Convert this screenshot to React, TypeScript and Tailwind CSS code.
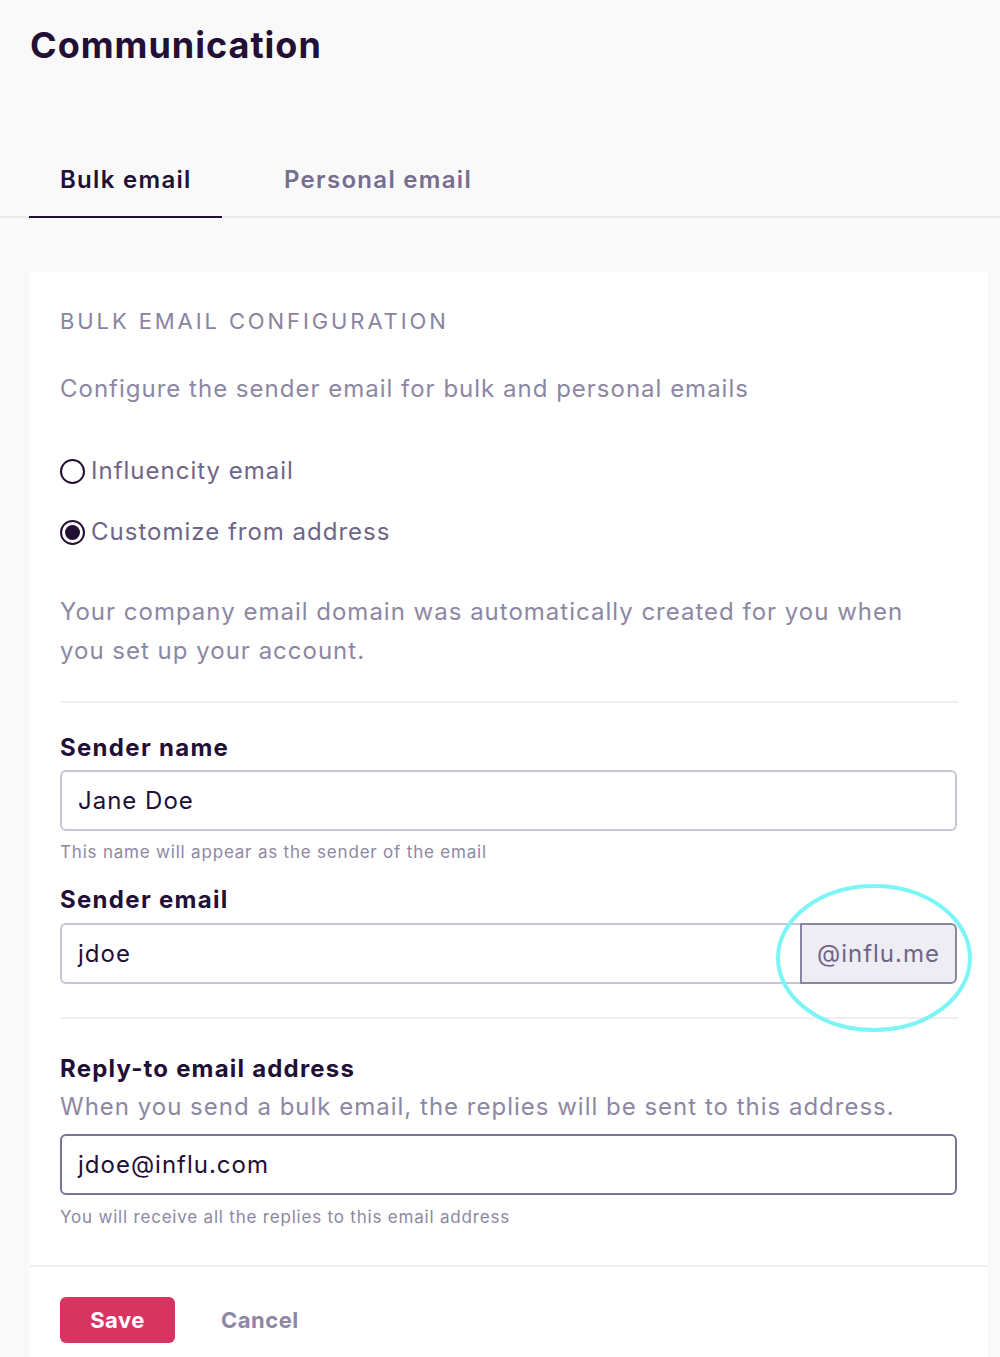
import React from "react";

export default function App() {
  const font = { fontFamily: "Inter, 'Noto Sans', sans-serif" };
  return (
    <div className="min-h-[1357px] w-[1000px] bg-[#f9f9fa] overflow-hidden" style={font}>
      <div className="pt-[22px] pl-[30px]">
        <h1 className="text-[36px] leading-[46px] font-bold tracking-[1px] text-[#230f35]">Communication</h1>
      </div>
      <div className="mt-[96px] flex border-b-2 border-[#ebe9f0] pl-[29px]">
        <div className="w-[193px] -mb-[2px] border-b-2 border-[#230f35] pb-[20px] pl-[31px] text-[24px] leading-[32px] font-semibold tracking-[1.3px] text-[#230f35]">
          Bulk email
        </div>
        <div className="pl-[62px] text-[24px] leading-[32px] font-semibold tracking-[1.3px] text-[#766d8f]">Personal email</div>
      </div>
      <div className="ml-[30px] mt-[54px] w-[958px] bg-white">
        <div className="px-[30px] pt-[35px]">
          <div className="text-[22px] leading-[28px] tracking-[2.9px] text-[#8a83a0]">BULK EMAIL CONFIGURATION</div>
          <div className="mt-[38px] text-[24px] leading-[32px] tracking-[1px] text-[#8d87a3]">
            Configure the sender email for bulk and personal emails
          </div>
          <div className="mt-[50px] flex items-center gap-[6px]">
            <span className="block h-[25px] w-[25px] rounded-full border-2 border-[#230f35]" />
            <span className="text-[24px] leading-[32px] tracking-[1px] text-[#6f6587]">Influencity email</span>
          </div>
          <div className="mt-[29px] flex items-center gap-[6px]">
            <span className="flex h-[25px] w-[25px] items-center justify-center rounded-full border-2 border-[#230f35]">
              <span className="block h-[15px] w-[15px] rounded-full bg-[#230f35]" />
            </span>
            <span className="text-[24px] leading-[32px] tracking-[1px] text-[#6f6587]">Customize from address</span>
          </div>
          <div className="mt-[44px] max-w-[880px] text-[24px] leading-[39px] tracking-[1px] text-[#8d87a3]">
            Your company email domain was automatically created for you when you set up your account.
          </div>
          <div className="mt-[31px] h-[2px] bg-[#efeef3]" />
          <div className="mt-[30px] text-[24px] leading-[30px] font-bold tracking-[1.3px] text-[#230f35]">Sender name</div>
          <div className="mt-[7px] mr-[1px] flex h-[61px] items-center rounded-[6px] border-2 border-[#c9c5d6] px-[16px] text-[24px] tracking-[1px] text-[#230f35]">
            Jane Doe
          </div>
          <div className="mt-[10px] text-[17px] leading-[22px] tracking-[0.8px] text-[#8d87a3]">This name will appear as the sender of the email</div>
          <div className="mt-[22px] text-[24px] leading-[30px] font-bold tracking-[1.3px] text-[#230f35]">Sender email</div>
          <div className="relative mt-[8px] mr-[1px] flex h-[61px]">
            <div className="flex flex-1 items-center rounded-l-[6px] border-2 border-r-0 border-[#c9c5d6] px-[16px] text-[24px] tracking-[1px] text-[#230f35]">
              jdoe
            </div>
            <div className="flex w-[157px] items-center justify-center rounded-r-[6px] border-2 border-[#8d84a3] bg-[#eeedf4] text-[24px] tracking-[1px] text-[#6f6587]">
              @influ.me
            </div>
            <svg className="pointer-events-none absolute left-[715px] top-[-40px]" width="198" height="150" viewBox="0 0 198 150">
              <ellipse cx="99" cy="75" rx="96" ry="72" fill="none" stroke="#7df5f7" strokeWidth="4" />
            </svg>
          </div>
          <div className="mt-[33px] h-[2px] bg-[#efeef3]" />
          <div className="mt-[35px] text-[24px] leading-[30px] font-bold tracking-[1.2px] text-[#230f35]">Reply-to email address</div>
          <div className="mt-[7px] text-[24px] leading-[32px] tracking-[1px] text-[#8d87a3]">
            When you send a bulk email, the replies will be sent to this address.
          </div>
          <div className="mt-[11px] mr-[1px] flex h-[61px] items-center rounded-[6px] border-2 border-[#7b7394] px-[16px] text-[24px] tracking-[1px] text-[#230f35]">
            jdoe@influ.com
          </div>
          <div className="mt-[11px] pb-[37px] text-[17px] leading-[22px] tracking-[0.8px] text-[#8d87a3]">You will receive all the replies to this email address</div>
        </div>
        <div className="h-[2px] bg-[#efeef3]" />
        <div className="flex items-center px-[30px] pt-[30px] pb-[40px]">
          <button className="h-[46px] w-[115px] rounded-[6px] bg-[#d83462] text-[22px] font-bold tracking-[0.5px] text-white">Save</button>
          <button className="ml-[46px] text-[22px] font-bold tracking-[0.5px] text-[#8d87a3]">Cancel</button>
        </div>
      </div>
    </div>
  );
}
